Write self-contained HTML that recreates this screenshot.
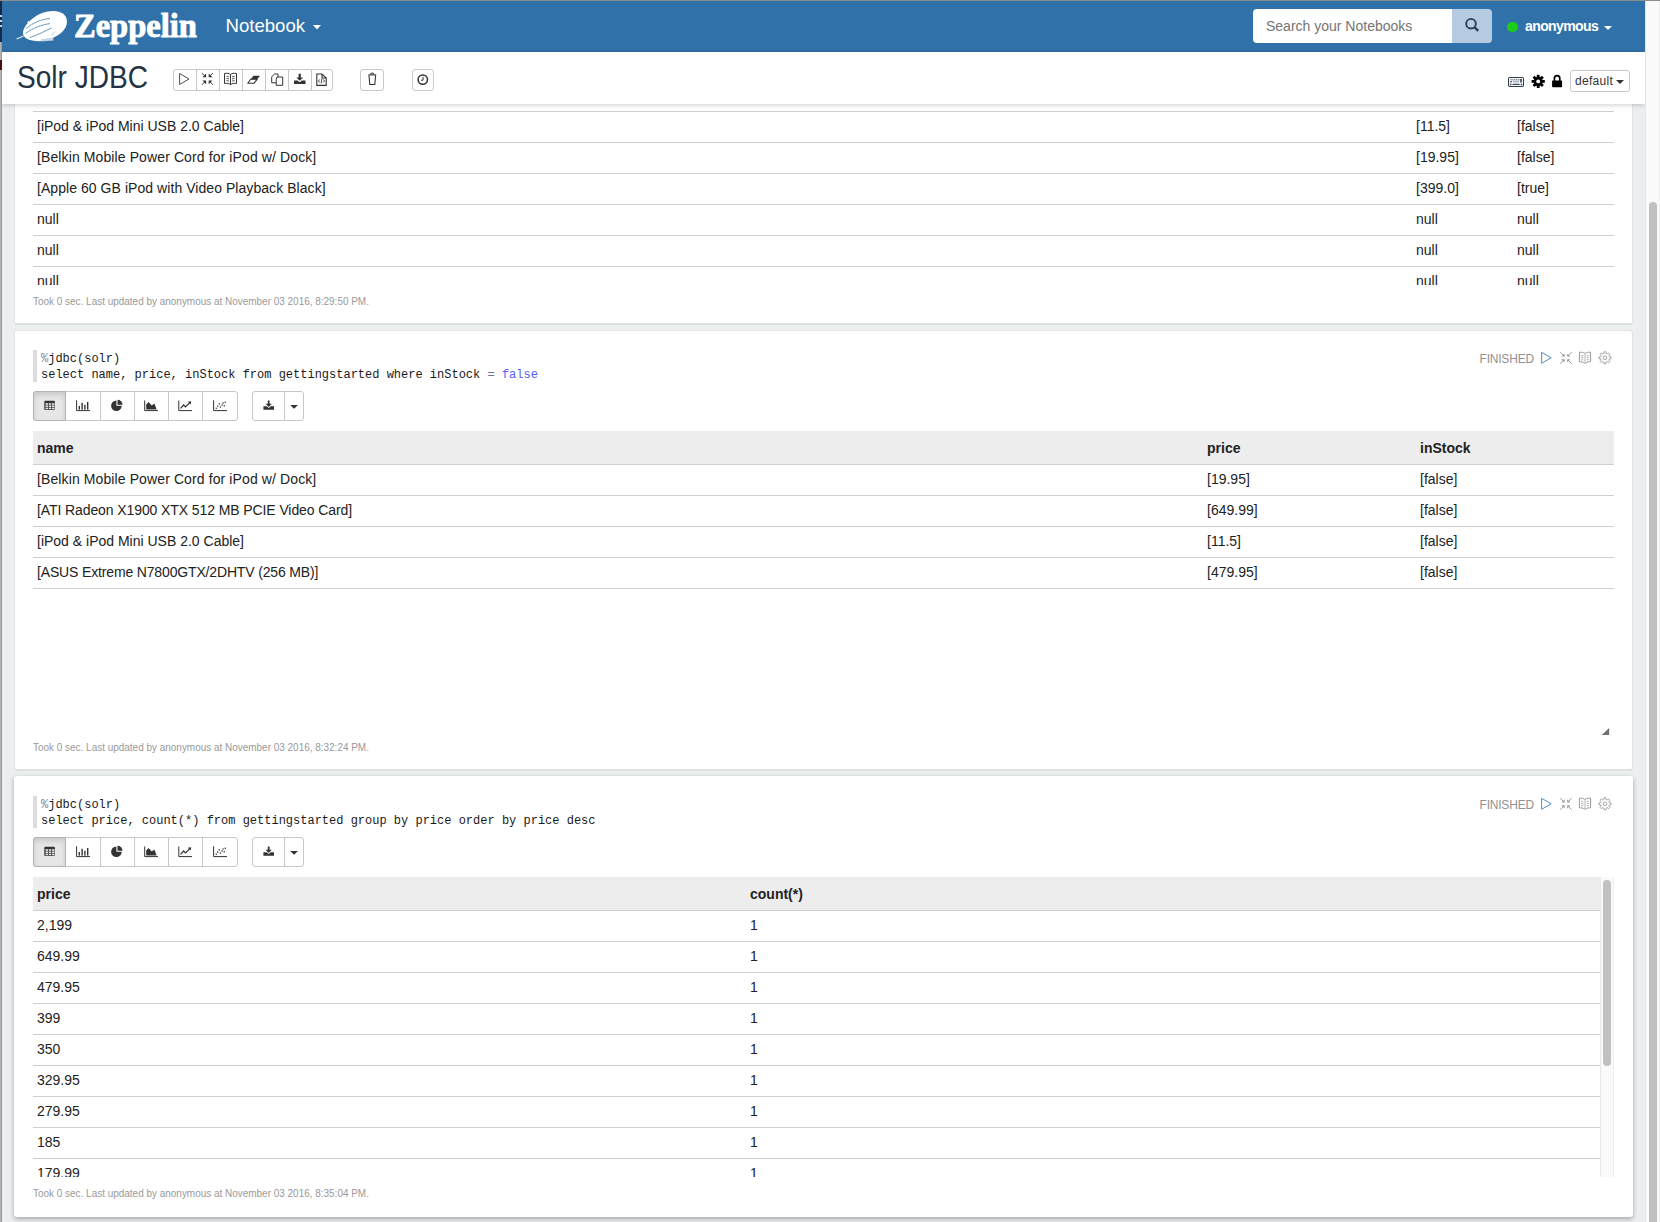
<!DOCTYPE html><html><head><meta charset="utf-8"><style>
*{box-sizing:border-box;margin:0;padding:0}
html,body{width:1660px;height:1222px;overflow:hidden}
body{position:relative;background:#ebeff0;font-family:"Liberation Sans",sans-serif;color:#333}
.abs{position:absolute}
svg{position:absolute;overflow:visible}
#topline{left:0;top:0;width:1660px;height:1px;background:#8c8c8c}
#lstrip0{left:0;top:1px;width:1px;height:1221px;background:#b3b3b3}
#lstrip1{left:1px;top:1px;width:1px;height:1221px;background:#9a9a9a}
#lnavy{left:0;top:1px;width:2px;height:41px;background:#112b4d}
#nav{left:2px;top:1px;width:1643px;height:51px;background:#3071a9}
#hdr{left:2px;top:52px;width:1643px;height:52px;background:#fff;box-shadow:0 1px 5px rgba(0,0,0,.2)}
#vtrack{left:1645px;top:1px;width:15px;height:1221px;background:#fafafa;border-left:1px solid #e6e6e6;border-right:1px solid #f0f0f0}
#vthumb{left:1649px;top:202px;width:8px;height:1040px;background:#c1c1c1;border-radius:4px}
.para{position:absolute;left:14px;width:1619px;background:#fff;border-radius:3px;border:1px solid #e4e4e4;border-bottom:2px solid #e0e0e0}
.para.sel{border:none;box-shadow:0 2px 5px rgba(0,0,0,.3)}
.rl{position:absolute;height:1px;background:#cfcfcf}
.c{position:absolute;font-size:14px;line-height:16px;color:#222;white-space:pre}
.th{position:absolute;font-size:14px;line-height:16px;color:#222;font-weight:bold;white-space:pre}
.ft{position:absolute;font-size:11px;line-height:12px;color:#999;white-space:pre;transform:scaleX(0.905);transform-origin:0 0}
.code{position:absolute;font-family:"Liberation Mono",monospace;font-size:12px;line-height:16px;color:#1a1a1a;white-space:pre}
.cb{position:absolute;width:4px;height:32px;background:#dcdcdc}
.bx{position:absolute;border:1px solid #ccc;background:#fff}
.fin{position:absolute;font-size:12px;line-height:12px;letter-spacing:-0.2px;color:#919191;white-space:pre}
</style></head><body>
<div class="para" style="top:-60px;height:385px"></div>
<div class="abs" style="left:0;top:0;width:1660px;height:285px;overflow:hidden">
<div class="rl" style="left:33px;top:111px;width:1581px"></div>
<div class="c" style="left:37px;top:118px">[iPod &amp; iPod Mini USB 2.0 Cable]</div>
<div class="c" style="left:1416px;top:118px">[11.5]</div>
<div class="c" style="left:1517px;top:118px">[false]</div>
<div class="rl" style="left:33px;top:142px;width:1581px"></div>
<div class="c" style="left:37px;top:149px;letter-spacing:0.109px">[Belkin Mobile Power Cord for iPod w/ Dock]</div>
<div class="c" style="left:1416px;top:149px">[19.95]</div>
<div class="c" style="left:1517px;top:149px">[false]</div>
<div class="rl" style="left:33px;top:173px;width:1581px"></div>
<div class="c" style="left:37px;top:180px;letter-spacing:0.057px">[Apple 60 GB iPod with Video Playback Black]</div>
<div class="c" style="left:1416px;top:180px">[399.0]</div>
<div class="c" style="left:1517px;top:180px">[true]</div>
<div class="rl" style="left:33px;top:204px;width:1581px"></div>
<div class="c" style="left:37px;top:211px">null</div>
<div class="c" style="left:1416px;top:211px">null</div>
<div class="c" style="left:1517px;top:211px">null</div>
<div class="rl" style="left:33px;top:235px;width:1581px"></div>
<div class="c" style="left:37px;top:242px">null</div>
<div class="c" style="left:1416px;top:242px">null</div>
<div class="c" style="left:1517px;top:242px">null</div>
<div class="rl" style="left:33px;top:266px;width:1581px"></div>
<div class="c" style="left:37px;top:273px">null</div>
<div class="c" style="left:1416px;top:273px">null</div>
<div class="c" style="left:1517px;top:273px">null</div>
<div class="rl" style="left:33px;top:297px;width:1581px"></div>
</div>
<div class="ft" style="left:33px;top:295px">Took 0 sec. Last updated by anonymous at November 03 2016, 8:29:50 PM.</div>
<div class="para" style="top:330px;height:441px"></div>
<div class="cb" style="left:33px;top:350px"></div>
<div class="code" style="left:41px;top:351px"><span style="color:#7b8794">%</span>jdbc(solr)
select name, price, inStock from gettingstarted where inStock <span style="color:#687687">=</span> <span style="color:#585cf6">false</span></div>
<div class="fin" style="left:1479.5px;top:353px">FINISHED</div>
<svg style="left:1530px;top:330px" width="90" height="40"><path d="M11.6,22.3 L21.2,27.8 L11.6,33.3 Z" fill="none" stroke="#4a87c6" stroke-width="0.95" stroke-linejoin="round"/><g stroke="#999" stroke-width="1"><path d="M30.2,22.2 L33.8,25.8"/><path d="M41.6,22.2 L38,25.8"/><path d="M30.2,33.6 L33.8,30"/><path d="M41.6,33.6 L38,30"/></g><g fill="#999"><path d="M34.6,26.6 L34.6,23.4 L31.4,26.6 Z"/><path d="M37.2,26.6 L37.2,23.4 L40.4,26.6 Z"/><path d="M34.6,29.2 L34.6,32.4 L31.4,29.2 Z"/><path d="M37.2,29.2 L37.2,32.4 L40.4,29.2 Z"/></g><g fill="none" stroke="#999" stroke-width="1"><path d="M49.4,22.2 C52,22.2 53.5,22.4 55,23.5 C56.5,22.4 58,22.2 60.6,22.2 L60.6,31.8 C58,31.8 56.5,32.2 55,33.4 C53.5,32.2 52,31.8 49.4,31.8 Z"/><path d="M55,23.5 L55,33.4" stroke="#ccc" stroke-width="1.4"/><path d="M51.2,25.3 L53.3,25.7 M51.2,27.5 L53.3,27.7 M51.2,29.7 L53.3,29.9 M56.7,25.7 L58.8,25.3 M56.7,27.7 L58.8,27.5 M56.7,29.9 L58.8,29.7" stroke-width=".8"/></g><g transform="translate(75,27.8)" fill="none" stroke="#999" stroke-width="0.9"><path d="M-1.07,-4.37 L-0.91,-6.03 L0.91,-6.03 L1.07,-4.37 L2.33,-3.85 L3.62,-4.91 L4.91,-3.62 L3.85,-2.33 L4.37,-1.07 L6.03,-0.91 L6.03,0.91 L4.37,1.07 L3.85,2.33 L4.91,3.62 L3.62,4.91 L2.33,3.85 L1.07,4.37 L0.91,6.03 L-0.91,6.03 L-1.07,4.37 L-2.33,3.85 L-3.62,4.91 L-4.91,3.62 L-3.85,2.33 L-4.37,1.07 L-6.03,0.91 L-6.03,-0.91 L-4.37,-1.07 L-3.85,-2.33 L-4.91,-3.62 L-3.62,-4.91 L-2.33,-3.85 Z"/><circle r="1.8"/></g></svg>
<div class="abs" style="left:33px;top:391px;width:205px;height:30px;border:1px solid #c8c8c8;border-radius:3px;background:#fff"></div>
<div class="abs" style="left:33px;top:391px;width:33px;height:30px;border:1px solid #b3b3b3;border-radius:3px 0 0 3px;background:#e6e6e6;box-shadow:inset 0 3px 5px rgba(0,0,0,.125)"></div>
<div class="abs" style="left:100px;top:392px;width:1px;height:28px;background:#c8c8c8"></div>
<div class="abs" style="left:134px;top:392px;width:1px;height:28px;background:#c8c8c8"></div>
<div class="abs" style="left:168px;top:392px;width:1px;height:28px;background:#c8c8c8"></div>
<div class="abs" style="left:202px;top:392px;width:1px;height:28px;background:#c8c8c8"></div>
<div class="abs" style="left:252px;top:391px;width:52px;height:30px;border:1px solid #c8c8c8;border-radius:3px;background:#fff"></div>
<div class="abs" style="left:284px;top:392px;width:1px;height:28px;background:#c8c8c8"></div>
<svg style="left:0;top:391px" width="320" height="30"><rect x="44.3" y="9.7" width="10.6" height="9.3" rx="1" fill="#333"/><rect x="45.50" y="12.20" width="2.5" height="1.6" fill="#e6e6e6"/><rect x="45.50" y="14.45" width="2.5" height="1.6" fill="#e6e6e6"/><rect x="45.50" y="16.70" width="2.5" height="1.6" fill="#e6e6e6"/><rect x="48.75" y="12.20" width="2.5" height="1.6" fill="#e6e6e6"/><rect x="48.75" y="14.45" width="2.5" height="1.6" fill="#e6e6e6"/><rect x="48.75" y="16.70" width="2.5" height="1.6" fill="#e6e6e6"/><rect x="52.00" y="12.20" width="2.5" height="1.6" fill="#e6e6e6"/><rect x="52.00" y="14.45" width="2.5" height="1.6" fill="#e6e6e6"/><rect x="52.00" y="16.70" width="2.5" height="1.6" fill="#e6e6e6"/><path d="M76.6,9.3 L76.6,19.6 L90,19.6" fill="none" stroke="#333" stroke-width="1"/><g fill="#333"><rect x="78.6" y="15" width="1.4" height="3.6"/><rect x="81.4" y="11.8" width="1.4" height="6.8"/><rect x="84.2" y="13.8" width="1.4" height="4.8"/><rect x="87" y="11" width="1.4" height="7.6"/></g><path d="M116.4,14.8 L116.4,9.5 A5.3,5.3 0 1 0 121.7,14.8 Z" fill="#333"/><path d="M117.5,13.7 L117.5,8.7 A5,5 0 0 1 122.5,13.7 Z" fill="#333"/><path d="M144.7,9.5 L144.7,19.6 L158,19.6" fill="none" stroke="#333" stroke-width="1"/><path d="M146.2,18.6 L146.2,13.6 L148.6,11 L151.8,14.6 L154.4,12.6 L156.6,18.6 Z" fill="#333"/><path d="M178.8,9.5 L178.8,19.6 L192,19.6" fill="none" stroke="#333" stroke-width="1"/><path d="M180.6,17.4 L183.6,14 L185.6,16 L190,11.4" fill="none" stroke="#333" stroke-width="1.2"/><path d="M187.8,10.7 L191.2,10.2 L190.7,13.6 Z" fill="#333"/><path d="M213.6,9.3 L213.6,19.6 L227,19.6" fill="none" stroke="#333" stroke-width="1"/><rect x="215.6" y="16.6" width="1.3" height="1.3" fill="#333"/><rect x="217" y="14.4" width="1.3" height="1.3" fill="#333"/><rect x="218.6" y="12.2" width="1.3" height="1.3" fill="#333"/><rect x="219.8" y="15.4" width="1.3" height="1.3" fill="#333"/><rect x="221.4" y="13.4" width="1.3" height="1.3" fill="#333"/><rect x="222.4" y="11.4" width="1.3" height="1.3" fill="#333"/><rect x="223.6" y="14.2" width="1.3" height="1.3" fill="#333"/><rect x="224.6" y="10.6" width="1.3" height="1.3" fill="#333"/><path d="M267.8,9.4 L269.6,9.4 L269.6,12.8 L271.8,12.8 L268.7,15.9 L265.6,12.8 L267.8,12.8 Z" fill="#333"/><path d="M263.4,15.2 L266.6,15.2 L268.7,17 L270.8,15.2 L274,15.2 L274,18.7 L263.4,18.7 Z" fill="#333"/><path d="M290.2,14 L298,14 L294.1,17.8 Z" fill="#333"/></svg>
<div class="abs" style="left:33px;top:431px;width:1581px;height:33px;background:#ededed"></div>
<div class="th" style="left:37px;top:440px">name</div>
<div class="th" style="left:1207px;top:440px">price</div>
<div class="th" style="left:1420px;top:440px">inStock</div>
<div class="rl" style="left:33px;top:464px;width:1581px"></div>
<div class="c" style="left:37px;top:471px;letter-spacing:0.109px">[Belkin Mobile Power Cord for iPod w/ Dock]</div>
<div class="c" style="left:1207px;top:471px">[19.95]</div>
<div class="c" style="left:1420px;top:471px">[false]</div>
<div class="rl" style="left:33px;top:495px;width:1581px"></div>
<div class="c" style="left:37px;top:502px;letter-spacing:-0.096px">[ATI Radeon X1900 XTX 512 MB PCIE Video Card]</div>
<div class="c" style="left:1207px;top:502px">[649.99]</div>
<div class="c" style="left:1420px;top:502px">[false]</div>
<div class="rl" style="left:33px;top:526px;width:1581px"></div>
<div class="c" style="left:37px;top:533px">[iPod &amp; iPod Mini USB 2.0 Cable]</div>
<div class="c" style="left:1207px;top:533px">[11.5]</div>
<div class="c" style="left:1420px;top:533px">[false]</div>
<div class="rl" style="left:33px;top:557px;width:1581px"></div>
<div class="c" style="left:37px;top:564px;letter-spacing:-0.153px">[ASUS Extreme N7800GTX/2DHTV (256 MB)]</div>
<div class="c" style="left:1207px;top:564px">[479.95]</div>
<div class="c" style="left:1420px;top:564px">[false]</div>
<div class="rl" style="left:33px;top:588px;width:1581px"></div>
<svg style="left:1600px;top:728px" width="12" height="10"><path d="M1.7,7 L9.1,0 L9.1,7 Z" fill="#333" opacity=".7"/></svg>
<div class="ft" style="left:33px;top:741px">Took 0 sec. Last updated by anonymous at November 03 2016, 8:32:24 PM.</div>
<div class="para sel" style="top:776px;height:441px"></div>
<div class="cb" style="left:33px;top:796px"></div>
<div class="code" style="left:41px;top:797px"><span style="color:#7b8794">%</span>jdbc(solr)
select price, count(*) from gettingstarted group by price order by price desc</div>
<div class="fin" style="left:1479.5px;top:799px">FINISHED</div>
<svg style="left:1530px;top:776px" width="90" height="40"><path d="M11.6,22.3 L21.2,27.8 L11.6,33.3 Z" fill="none" stroke="#4a87c6" stroke-width="0.95" stroke-linejoin="round"/><g stroke="#999" stroke-width="1"><path d="M30.2,22.2 L33.8,25.8"/><path d="M41.6,22.2 L38,25.8"/><path d="M30.2,33.6 L33.8,30"/><path d="M41.6,33.6 L38,30"/></g><g fill="#999"><path d="M34.6,26.6 L34.6,23.4 L31.4,26.6 Z"/><path d="M37.2,26.6 L37.2,23.4 L40.4,26.6 Z"/><path d="M34.6,29.2 L34.6,32.4 L31.4,29.2 Z"/><path d="M37.2,29.2 L37.2,32.4 L40.4,29.2 Z"/></g><g fill="none" stroke="#999" stroke-width="1"><path d="M49.4,22.2 C52,22.2 53.5,22.4 55,23.5 C56.5,22.4 58,22.2 60.6,22.2 L60.6,31.8 C58,31.8 56.5,32.2 55,33.4 C53.5,32.2 52,31.8 49.4,31.8 Z"/><path d="M55,23.5 L55,33.4" stroke="#ccc" stroke-width="1.4"/><path d="M51.2,25.3 L53.3,25.7 M51.2,27.5 L53.3,27.7 M51.2,29.7 L53.3,29.9 M56.7,25.7 L58.8,25.3 M56.7,27.7 L58.8,27.5 M56.7,29.9 L58.8,29.7" stroke-width=".8"/></g><g transform="translate(75,27.8)" fill="none" stroke="#999" stroke-width="0.9"><path d="M-1.07,-4.37 L-0.91,-6.03 L0.91,-6.03 L1.07,-4.37 L2.33,-3.85 L3.62,-4.91 L4.91,-3.62 L3.85,-2.33 L4.37,-1.07 L6.03,-0.91 L6.03,0.91 L4.37,1.07 L3.85,2.33 L4.91,3.62 L3.62,4.91 L2.33,3.85 L1.07,4.37 L0.91,6.03 L-0.91,6.03 L-1.07,4.37 L-2.33,3.85 L-3.62,4.91 L-4.91,3.62 L-3.85,2.33 L-4.37,1.07 L-6.03,0.91 L-6.03,-0.91 L-4.37,-1.07 L-3.85,-2.33 L-4.91,-3.62 L-3.62,-4.91 L-2.33,-3.85 Z"/><circle r="1.8"/></g></svg>
<div class="abs" style="left:33px;top:837px;width:205px;height:30px;border:1px solid #c8c8c8;border-radius:3px;background:#fff"></div>
<div class="abs" style="left:33px;top:837px;width:33px;height:30px;border:1px solid #b3b3b3;border-radius:3px 0 0 3px;background:#e6e6e6;box-shadow:inset 0 3px 5px rgba(0,0,0,.125)"></div>
<div class="abs" style="left:100px;top:838px;width:1px;height:28px;background:#c8c8c8"></div>
<div class="abs" style="left:134px;top:838px;width:1px;height:28px;background:#c8c8c8"></div>
<div class="abs" style="left:168px;top:838px;width:1px;height:28px;background:#c8c8c8"></div>
<div class="abs" style="left:202px;top:838px;width:1px;height:28px;background:#c8c8c8"></div>
<div class="abs" style="left:252px;top:837px;width:52px;height:30px;border:1px solid #c8c8c8;border-radius:3px;background:#fff"></div>
<div class="abs" style="left:284px;top:838px;width:1px;height:28px;background:#c8c8c8"></div>
<svg style="left:0;top:837px" width="320" height="30"><rect x="44.3" y="9.7" width="10.6" height="9.3" rx="1" fill="#333"/><rect x="45.50" y="12.20" width="2.5" height="1.6" fill="#e6e6e6"/><rect x="45.50" y="14.45" width="2.5" height="1.6" fill="#e6e6e6"/><rect x="45.50" y="16.70" width="2.5" height="1.6" fill="#e6e6e6"/><rect x="48.75" y="12.20" width="2.5" height="1.6" fill="#e6e6e6"/><rect x="48.75" y="14.45" width="2.5" height="1.6" fill="#e6e6e6"/><rect x="48.75" y="16.70" width="2.5" height="1.6" fill="#e6e6e6"/><rect x="52.00" y="12.20" width="2.5" height="1.6" fill="#e6e6e6"/><rect x="52.00" y="14.45" width="2.5" height="1.6" fill="#e6e6e6"/><rect x="52.00" y="16.70" width="2.5" height="1.6" fill="#e6e6e6"/><path d="M76.6,9.3 L76.6,19.6 L90,19.6" fill="none" stroke="#333" stroke-width="1"/><g fill="#333"><rect x="78.6" y="15" width="1.4" height="3.6"/><rect x="81.4" y="11.8" width="1.4" height="6.8"/><rect x="84.2" y="13.8" width="1.4" height="4.8"/><rect x="87" y="11" width="1.4" height="7.6"/></g><path d="M116.4,14.8 L116.4,9.5 A5.3,5.3 0 1 0 121.7,14.8 Z" fill="#333"/><path d="M117.5,13.7 L117.5,8.7 A5,5 0 0 1 122.5,13.7 Z" fill="#333"/><path d="M144.7,9.5 L144.7,19.6 L158,19.6" fill="none" stroke="#333" stroke-width="1"/><path d="M146.2,18.6 L146.2,13.6 L148.6,11 L151.8,14.6 L154.4,12.6 L156.6,18.6 Z" fill="#333"/><path d="M178.8,9.5 L178.8,19.6 L192,19.6" fill="none" stroke="#333" stroke-width="1"/><path d="M180.6,17.4 L183.6,14 L185.6,16 L190,11.4" fill="none" stroke="#333" stroke-width="1.2"/><path d="M187.8,10.7 L191.2,10.2 L190.7,13.6 Z" fill="#333"/><path d="M213.6,9.3 L213.6,19.6 L227,19.6" fill="none" stroke="#333" stroke-width="1"/><rect x="215.6" y="16.6" width="1.3" height="1.3" fill="#333"/><rect x="217" y="14.4" width="1.3" height="1.3" fill="#333"/><rect x="218.6" y="12.2" width="1.3" height="1.3" fill="#333"/><rect x="219.8" y="15.4" width="1.3" height="1.3" fill="#333"/><rect x="221.4" y="13.4" width="1.3" height="1.3" fill="#333"/><rect x="222.4" y="11.4" width="1.3" height="1.3" fill="#333"/><rect x="223.6" y="14.2" width="1.3" height="1.3" fill="#333"/><rect x="224.6" y="10.6" width="1.3" height="1.3" fill="#333"/><path d="M267.8,9.4 L269.6,9.4 L269.6,12.8 L271.8,12.8 L268.7,15.9 L265.6,12.8 L267.8,12.8 Z" fill="#333"/><path d="M263.4,15.2 L266.6,15.2 L268.7,17 L270.8,15.2 L274,15.2 L274,18.7 L263.4,18.7 Z" fill="#333"/><path d="M290.2,14 L298,14 L294.1,17.8 Z" fill="#333"/></svg>
<div class="abs" style="left:33px;top:877px;width:1581px;height:300px;overflow:hidden">
<div class="abs" style="left:0px;top:0px;width:1567px;height:33px;background:#ededed"></div>
<div class="th" style="left:4px;top:9px">price</div>
<div class="th" style="left:717px;top:9px">count(*)</div>
<div class="rl" style="left:0px;top:33px;width:1567px"></div>
<div class="c" style="left:4px;top:40px">2,199</div>
<div class="c" style="left:717px;top:40px">1</div>
<div class="rl" style="left:0px;top:64px;width:1567px"></div>
<div class="c" style="left:4px;top:71px">649.99</div>
<div class="c" style="left:717px;top:71px">1</div>
<div class="rl" style="left:0px;top:95px;width:1567px"></div>
<div class="c" style="left:4px;top:102px">479.95</div>
<div class="c" style="left:717px;top:102px">1</div>
<div class="rl" style="left:0px;top:126px;width:1567px"></div>
<div class="c" style="left:4px;top:133px">399</div>
<div class="c" style="left:717px;top:133px">1</div>
<div class="rl" style="left:0px;top:157px;width:1567px"></div>
<div class="c" style="left:4px;top:164px">350</div>
<div class="c" style="left:717px;top:164px">1</div>
<div class="rl" style="left:0px;top:188px;width:1567px"></div>
<div class="c" style="left:4px;top:195px">329.95</div>
<div class="c" style="left:717px;top:195px">1</div>
<div class="rl" style="left:0px;top:219px;width:1567px"></div>
<div class="c" style="left:4px;top:226px">279.95</div>
<div class="c" style="left:717px;top:226px">1</div>
<div class="rl" style="left:0px;top:250px;width:1567px"></div>
<div class="c" style="left:4px;top:257px">185</div>
<div class="c" style="left:717px;top:257px">1</div>
<div class="rl" style="left:0px;top:281px;width:1567px"></div>
<div class="c" style="left:4px;top:288px">179.99</div>
<div class="c" style="left:717px;top:288px">1</div>
<div class="rl" style="left:0px;top:312px;width:1567px"></div>
<div class="c" style="left:4px;top:319px">0</div>
<div class="c" style="left:717px;top:319px">1</div>
<div class="rl" style="left:0px;top:343px;width:1567px"></div>
</div>
<div class="abs" style="left:1600px;top:877px;width:14px;height:300px;background:#fafafa;border-left:1px solid #e8e8e8;border-right:1px solid #eee"></div>
<div class="abs" style="left:1603px;top:880px;width:8px;height:186px;background:#c1c1c1;border-radius:4px"></div>
<div class="ft" style="left:33px;top:1187px">Took 0 sec. Last updated by anonymous at November 03 2016, 8:35:04 PM.</div>
<div class="abs" id="nav"></div>
<svg style="left:0;top:0" width="80" height="52" viewBox="0 0 80 52"><path d="M23,34 C22,28 30,18 42,13 C50,10 60,10 64.5,15 C69,20 67,28 61,33 C55,38 46,41.3 38,41.2 C30,41 24,38.5 23,34 Z" fill="#fff"/><path d="M17,38.8 L23,36.2" stroke="#fff" stroke-width="1.2" stroke-linecap="round" opacity=".9"/><path d="M27,22.8 l1.6,-2 l1,2.6 z" fill="#fff"/><g stroke="#3071a9" fill="none" opacity=".75" stroke-width=".95"><path d="M26,28.6 C33,22.5 42,19.2 50,18.5"/><path d="M25.5,33.4 C33,28.2 42,24.6 50,23.6"/><path d="M30,37.6 C38,34.6 45,31.2 51.5,28"/></g><path d="M51,35.3 C52.6,34 54,32.8 55.2,31.4" stroke="#3071a9" stroke-width="0.8" fill="none" opacity=".45"/><path d="M40.5,39.6 L53,37.6 L53.5,40.6 L41,41.4 Z" fill="#c3d5e8"/></svg>
<div class="abs" style="left:74px;top:7px;font-family:'Liberation Serif',serif;font-weight:bold;font-size:33px;line-height:38px;color:#fff;-webkit-text-stroke:0.9px #fff;transform:scaleX(0.985);transform-origin:0 0;white-space:pre">Zeppelin</div>
<div class="abs" style="left:225.5px;top:16px;font-size:18.6px;line-height:20px;color:#fff;white-space:pre">Notebook</div>
<svg style="left:313px;top:25px" width="8" height="5"><path d="M0,0 L8,0 L4,4.5 Z" fill="#fff"/></svg>
<div class="abs" style="left:1253px;top:9px;width:199px;height:34px;background:#fff;border-radius:4px 0 0 4px"></div>
<div class="abs" style="left:1266px;top:18px;font-size:14px;line-height:16px;color:#757575;white-space:pre">Search your Notebooks</div>
<div class="abs" style="left:1452px;top:9px;width:40px;height:34px;background:#b5cbe1;border-radius:0 4px 4px 0"></div>
<svg style="left:1460px;top:14px" width="24" height="24"><circle cx="11" cy="9.7" r="4.8" stroke="#2b3e50" stroke-width="1.9" fill="none"/><path d="M14.3,13 L18.2,16.9" stroke="#2b3e50" stroke-width="2.4"/></svg>
<div class="abs" style="left:1507px;top:21.5px;width:10.5px;height:10.5px;border-radius:50%;background:#1ccc1c"></div>
<div class="abs" style="left:1525px;top:18px;font-size:14px;font-weight:bold;letter-spacing:-0.6px;line-height:16px;color:#fff;white-space:pre">anonymous</div>
<svg style="left:1604px;top:26px" width="8" height="5"><path d="M0,0 L8,0 L4,4 Z" fill="#fff"/></svg>
<div class="abs" id="hdr"></div>
<div class="abs" style="left:17px;top:60.6px;font-size:31px;line-height:34px;color:#243244;transform:scaleX(0.905);transform-origin:0 0;white-space:pre">Solr JDBC</div>
<div class="abs" style="left:173px;top:69px;width:160px;height:22px;border:1px solid #c8c8c8;border-radius:3px;background:#fff"></div>
<div class="abs" style="left:196px;top:70px;width:1px;height:20px;background:#c8c8c8"></div>
<div class="abs" style="left:219px;top:70px;width:1px;height:20px;background:#c8c8c8"></div>
<div class="abs" style="left:242px;top:70px;width:1px;height:20px;background:#c8c8c8"></div>
<div class="abs" style="left:265px;top:70px;width:1px;height:20px;background:#c8c8c8"></div>
<div class="abs" style="left:288px;top:70px;width:1px;height:20px;background:#c8c8c8"></div>
<div class="abs" style="left:311px;top:70px;width:1px;height:20px;background:#c8c8c8"></div>
<svg style="left:0;top:0" width="440" height="100"><path d="M179.6,73.5 L189,79 L179.6,84.5 Z" fill="none" stroke="#444" stroke-width="0.95" stroke-linejoin="round"/><g stroke="#333" stroke-width="0.95"><path d="M201.9,73 L205,76.1"/><path d="M212.9,73 L209.8,76.1"/><path d="M201.9,84.8 L205,81.7"/><path d="M212.9,84.8 L209.8,81.7"/></g><g fill="#333"><path d="M206.1,77.3 L206.1,73.6 L202.4,77.3 Z"/><path d="M208.7,77.3 L208.7,73.6 L212.4,77.3 Z"/><path d="M206.1,80.5 L206.1,84.2 L202.4,80.5 Z"/><path d="M208.7,80.5 L208.7,84.2 L212.4,80.5 Z"/></g><g fill="none" stroke="#333" stroke-width="1"><path d="M224.5,73.5 C227,73 229,73.3 230.5,74.5 C232,73.3 234,73 236.5,73.5 L236.5,83.5 C234,83 232,83.5 230.5,84.6 C229,83.5 227,83 224.5,83.5 Z"/><path d="M230.5,74.5 L230.5,84.6"/><path d="M226.3,76.2 L229,76.8 M226.3,78.4 L229,78.9 M226.3,80.6 L229,81 M232,76.8 L234.7,76.2 M232,78.9 L234.7,78.4 M232,81 L234.7,80.6" stroke-width=".8"/></g><path d="M253.5,75.8 L260,75.8 L257.2,79.2 L250.7,79.2 Z" fill="#333"/><path d="M250.7,79.2 L257.2,79.2 L254,83.3 L247.8,83.3 Z" fill="none" stroke="#333" stroke-width="1.1" stroke-linejoin="round"/><g fill="#fff" stroke="#333" stroke-width="1"><path d="M274.5,74 L278,74 L278,82.8 L271.7,82.8 L271.7,76.8 Z"/><path d="M277,77 L282.7,77 L282.7,85.3 L276.2,85.3 L276.2,79.6 Z"/></g><path d="M298.6,73.8 L300.8,73.8 L300.8,77.6 L303,77.6 L299.7,80.8 L296.4,77.6 L298.6,77.6 Z" fill="#333"/><path d="M294,80.6 L297.5,80.6 L299.7,82.2 L301.9,80.6 L305.5,80.6 L305.5,84 L294,84 Z" fill="#333"/><g fill="none" stroke="#333" stroke-width="1.1"><path d="M316.8,74 L322,74 L326.2,78 L326.2,85.4 L316.8,85.4 Z"/><path d="M322,74 L322,78 L326.2,78"/></g><g fill="none" stroke="#333" stroke-width=".9"><path d="M319.6,79.5 L318.5,81 L319.6,82.5"/><path d="M323.4,79.5 L324.5,81 L323.4,82.5"/><path d="M321.9,78.6 L321.1,83.4"/></g><g fill="none" stroke="#333" stroke-width="1.1"><path d="M368.3,74.9 L376.2,74.9"/><path d="M369,75.2 L369.8,84.5 L374.8,84.5 L375.6,75.2"/><path d="M370.7,74.6 C370.7,72.5 373.8,72.5 373.8,74.6"/></g><circle cx="422.8" cy="79.6" r="4.7" fill="none" stroke="#333" stroke-width="1.5"/><path d="M423,76.8 L423,80.2 L421,80.2" fill="none" stroke="#333" stroke-width="1"/></svg>
<div class="abs" style="left:360px;top:69px;width:24px;height:22px;border:1px solid #c8c8c8;border-radius:3px"></div>
<div class="abs" style="left:412px;top:69px;width:22px;height:22px;border:1px solid #c8c8c8;border-radius:3px"></div>
<svg style="left:1500px;top:60px" width="140" height="40"><rect x="8.5" y="17.4" width="15" height="9.1" rx="1.3" fill="none" stroke="#2c3e50" stroke-width="1.05"/><rect x="10.4" y="18.9" width="1.3" height="1.6" fill="#7d8a98"/><rect x="12.3" y="18.9" width="1.3" height="1.6" fill="#7d8a98"/><rect x="14.2" y="18.9" width="1.3" height="1.6" fill="#7d8a98"/><rect x="16.1" y="18.9" width="1.3" height="1.6" fill="#7d8a98"/><rect x="18.0" y="18.9" width="1.3" height="1.6" fill="#7d8a98"/><rect x="19.9" y="18.9" width="1.3" height="1.6" fill="#7d8a98"/><path d="M20.6,19 L22,19 L21.6,22.4 L20,22.4 Z" fill="#2c3e50"/><rect x="10.2" y="21.2" width="1.8" height="1.2" fill="#3c4b5b"/><rect x="13" y="21.2" width="6" height="1.2" fill="#9aa5b0"/><circle cx="10.8" cy="24.4" r=".85" fill="#3c4b5b"/><rect x="12.3" y="23.8" width="7.6" height="1.2" rx=".6" fill="#3c4b5b"/><circle cx="21.4" cy="24.4" r=".85" fill="#3c4b5b"/><g transform="translate(38.2,21.4)"><circle r="4.6" fill="#000"/><rect x="-1.4" y="-6.6" width="2.8" height="3" fill="#000" transform="rotate(0)"/><rect x="-1.4" y="-6.6" width="2.8" height="3" fill="#000" transform="rotate(45)"/><rect x="-1.4" y="-6.6" width="2.8" height="3" fill="#000" transform="rotate(90)"/><rect x="-1.4" y="-6.6" width="2.8" height="3" fill="#000" transform="rotate(135)"/><rect x="-1.4" y="-6.6" width="2.8" height="3" fill="#000" transform="rotate(180)"/><rect x="-1.4" y="-6.6" width="2.8" height="3" fill="#000" transform="rotate(225)"/><rect x="-1.4" y="-6.6" width="2.8" height="3" fill="#000" transform="rotate(270)"/><rect x="-1.4" y="-6.6" width="2.8" height="3" fill="#000" transform="rotate(315)"/><circle r="1.9" fill="#fff"/></g><path d="M54.4,21 L54.4,18.6 C54.4,14.7 59.8,14.7 59.8,18.6 L59.8,21" fill="none" stroke="#000" stroke-width="1.7"/><rect x="52.1" y="20.4" width="10" height="6.8" rx=".7" fill="#000"/></svg>
<div class="abs" style="left:1570px;top:70px;width:60px;height:22px;border:1px solid #c8c8c8;border-radius:3px;background:#fff"></div>
<div class="abs" style="left:1575px;top:74px;font-size:12px;letter-spacing:0.3px;line-height:14px;color:#333;white-space:pre">default</div>
<svg style="left:1616px;top:80px" width="8" height="5"><path d="M0,0 L8,0 L4,4 Z" fill="#333"/></svg>
<div class="abs" id="vtrack"></div><div class="abs" id="vthumb"></div>
<div class="abs" id="topline"></div><div class="abs" id="lstrip0"></div><div class="abs" id="lstrip1"></div><div class="abs" id="lnavy"></div><div class="abs" style="left:0;top:15px;width:2px;height:2px;background:#c9d0da"></div><div class="abs" style="left:0;top:20px;width:2px;height:2px;background:#c9d0da"></div><div class="abs" style="left:0;top:25px;width:2px;height:2px;background:#c9d0da"></div><div class="abs" style="left:0;top:60px;width:2px;height:10px;background:#4a1010"></div>
</body></html>
